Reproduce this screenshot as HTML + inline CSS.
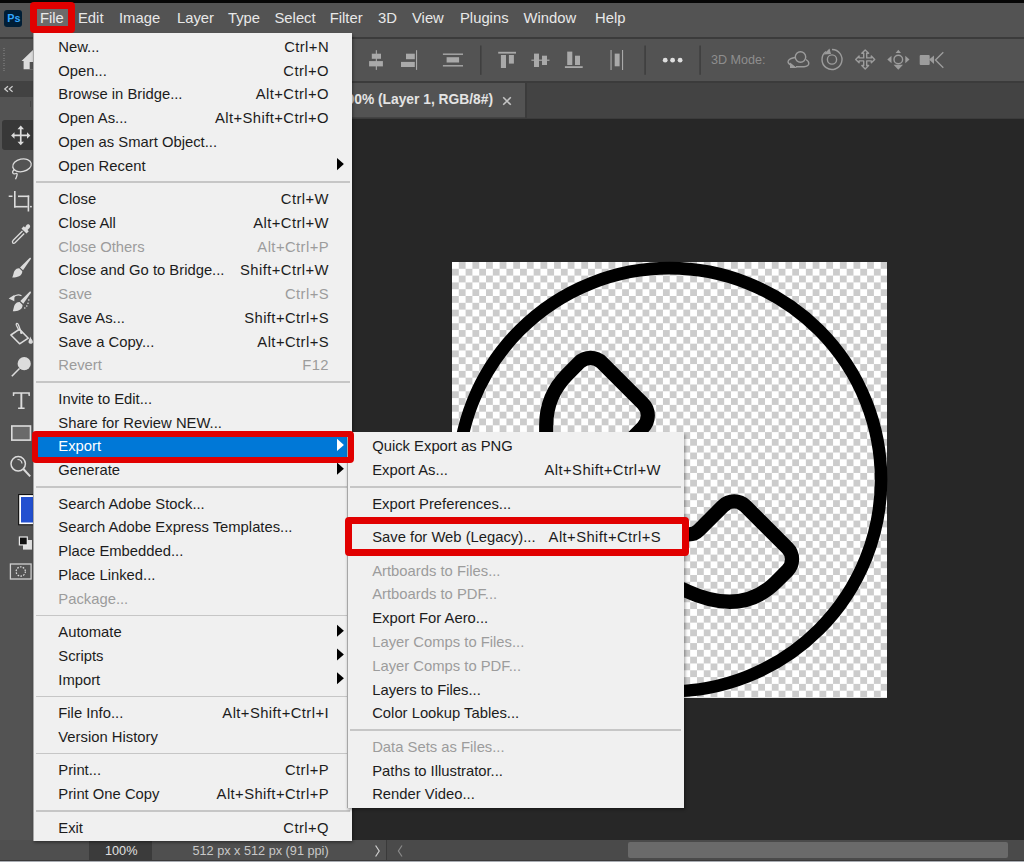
<!DOCTYPE html>
<html><head><meta charset="utf-8"><style>
html,body{margin:0;padding:0;width:1024px;height:862px;overflow:hidden;background:#272727;}
.t{position:absolute;font-family:"Liberation Sans", sans-serif;line-height:20px;white-space:nowrap;}
.r{position:absolute;}
svg{position:absolute;}
</style></head><body>

<div class="r" style="left:0px;top:0px;width:1024px;height:3px;background:#060606;"></div>
<div class="r" style="left:0px;top:3px;width:1024px;height:34px;background:#535353;"></div>
<div class="r" style="left:0px;top:37px;width:1024px;height:1.5px;background:#3b3b3b;"></div>
<div class="r" style="left:0px;top:38.5px;width:1024px;height:42.5px;background:#535353;"></div>
<div class="r" style="left:0px;top:80.7px;width:1024px;height:2px;background:#3b3b3b;"></div>
<div class="r" style="left:0px;top:82.7px;width:1024px;height:36.2px;background:#434343;"></div>
<div class="r" style="left:0px;top:82.7px;width:525.3px;height:34.8px;background:#535353;"></div>
<div class="r" style="left:525.3px;top:82.7px;width:1.6px;height:36px;background:#3b3b3b;"></div>
<div class="r" style="left:0px;top:117.5px;width:1024px;height:1.4px;background:#3b3b3b;"></div>
<div class="r" style="left:38px;top:118.9px;width:986px;height:721.1px;background:#272727;"></div>
<div class="r" style="left:0px;top:81px;width:38px;height:16px;background:#424242;"></div>
<div class="r" style="left:0px;top:97px;width:38px;height:765px;background:#535353;"></div>
<div class="r" style="left:30px;top:100.5px;width:1.2px;height:6px;background:#444444;"></div>
<div class="r" style="left:0px;top:840px;width:1024px;height:20px;background:#4f4f4f;"></div>
<div class="r" style="left:88.5px;top:840px;width:63.5px;height:20px;background:#3b3b3b;"></div>
<div class="r" style="left:386px;top:840px;width:638px;height:20px;background:#4a4a4a;"></div>
<div class="r" style="left:627.7px;top:842.3px;width:380px;height:15.6px;background:#6a6a6a;border-radius:2px;"></div>
<div class="r" style="left:0px;top:860px;width:1024px;height:1px;background:#3a3a3a;"></div>
<div class="r" style="left:0px;top:861px;width:1024px;height:1px;background:#a9adb3;"></div>
<div class="r" style="left:4px;top:9.8px;width:17.7px;height:17.2px;background:#001e36;border-radius:3px;"></div>
<div class="t" style="left:7.20px;top:8.16px;font-size:10.8px;color:#31a8ff;font-weight:bold;">Ps</div>
<div class="r" style="left:36px;top:9px;width:32px;height:17px;background:#6b6b6b;"></div>
<div class="t" style="left:40.00px;top:8.17px;font-size:14.8px;color:#e8e8e8;font-weight:normal;">File</div>
<div class="t" style="left:78.00px;top:8.17px;font-size:14.8px;color:#e8e8e8;font-weight:normal;">Edit</div>
<div class="t" style="left:119.00px;top:8.17px;font-size:14.8px;color:#e8e8e8;font-weight:normal;">Image</div>
<div class="t" style="left:177.00px;top:8.17px;font-size:14.8px;color:#e8e8e8;font-weight:normal;">Layer</div>
<div class="t" style="left:228.00px;top:8.17px;font-size:14.8px;color:#e8e8e8;font-weight:normal;">Type</div>
<div class="t" style="left:274.50px;top:8.17px;font-size:14.8px;color:#e8e8e8;font-weight:normal;">Select</div>
<div class="t" style="left:329.75px;top:8.17px;font-size:14.8px;color:#e8e8e8;font-weight:normal;">Filter</div>
<div class="t" style="left:378.00px;top:8.17px;font-size:14.8px;color:#e8e8e8;font-weight:normal;">3D</div>
<div class="t" style="left:412.00px;top:8.17px;font-size:14.8px;color:#e8e8e8;font-weight:normal;">View</div>
<div class="t" style="left:460.00px;top:8.17px;font-size:14.8px;color:#e8e8e8;font-weight:normal;">Plugins</div>
<div class="t" style="left:523.50px;top:8.17px;font-size:14.8px;color:#e8e8e8;font-weight:normal;">Window</div>
<div class="t" style="left:595.00px;top:8.17px;font-size:14.8px;color:#e8e8e8;font-weight:normal;">Help</div>
<div class="r" style="left:30px;top:2.2px;width:45px;height:30.9px;box-sizing:border-box;border:7.1px solid #e10000;border-radius:4px;"></div>
<div class="r" style="left:3px;top:47.5px;width:2px;height:1.2px;background:#6e6e6e;"></div>
<div class="r" style="left:3px;top:50.0px;width:2px;height:1.2px;background:#6e6e6e;"></div>
<div class="r" style="left:3px;top:52.5px;width:2px;height:1.2px;background:#6e6e6e;"></div>
<div class="r" style="left:3px;top:55.0px;width:2px;height:1.2px;background:#6e6e6e;"></div>
<div class="r" style="left:3px;top:57.5px;width:2px;height:1.2px;background:#6e6e6e;"></div>
<div class="r" style="left:3px;top:60.0px;width:2px;height:1.2px;background:#6e6e6e;"></div>
<div class="r" style="left:3px;top:62.5px;width:2px;height:1.2px;background:#6e6e6e;"></div>
<div class="r" style="left:3px;top:65.0px;width:2px;height:1.2px;background:#6e6e6e;"></div>
<div class="r" style="left:3px;top:67.5px;width:2px;height:1.2px;background:#6e6e6e;"></div>
<div class="r" style="left:3px;top:70.0px;width:2px;height:1.2px;background:#6e6e6e;"></div>
<svg style="left:0;top:0" width="1024" height="120"><g fill="#dcdcdc"><path d="M21.5 60.9 L34 49 L46 60.9 L43 60.9 L43 69.2 L23.6 69.2 L23.6 60.9 Z"/></g><rect x="29.7" y="62" width="8" height="7.2" fill="#535353"/></svg>
<svg style="left:0;top:0" width="1024" height="82"><g fill="#a9a9a9"><rect x="375.80" y="50.20" width="1.10" height="19.70" fill="#a9a9a9"/><rect x="371.80" y="53.70" width="9.20" height="5.10" fill="#a9a9a9"/><rect x="369.10" y="61.10" width="13.80" height="5.30" fill="#a9a9a9"/><rect x="416.00" y="50.20" width="1.10" height="19.70" fill="#a9a9a9"/><rect x="406.00" y="53.70" width="8.80" height="5.50" fill="#a9a9a9"/><rect x="401.00" y="61.90" width="13.80" height="5.10" fill="#a9a9a9"/><rect x="442.90" y="53.50" width="20.10" height="1.40" fill="#a9a9a9"/><rect x="446.60" y="57.20" width="12.50" height="5.30" fill="#a9a9a9"/><rect x="442.90" y="65.10" width="20.10" height="1.40" fill="#a9a9a9"/><rect x="480.00" y="45.50" width="1.60" height="29.30" fill="#3f3f3f"/><rect x="498.20" y="51.80" width="17.80" height="1.80" fill="#a9a9a9"/><rect x="500.90" y="55.00" width="5.10" height="13.00" fill="#a9a9a9"/><rect x="508.90" y="55.00" width="5.00" height="8.60" fill="#a9a9a9"/><rect x="531.40" y="59.60" width="18.10" height="1.20" fill="#a9a9a9"/><rect x="534.00" y="53.60" width="5.00" height="13.40" fill="#a9a9a9"/><rect x="542.00" y="55.70" width="5.00" height="9.30" fill="#a9a9a9"/><rect x="567.20" y="51.60" width="5.10" height="13.40" fill="#a9a9a9"/><rect x="575.00" y="55.70" width="5.00" height="9.30" fill="#a9a9a9"/><rect x="564.90" y="66.20" width="17.80" height="1.80" fill="#a9a9a9"/><rect x="610.50" y="50.00" width="1.10" height="20.00" fill="#a9a9a9"/><rect x="622.00" y="50.00" width="1.10" height="20.00" fill="#a9a9a9"/><rect x="614.70" y="53.60" width="4.90" height="12.70" fill="#a9a9a9"/><rect x="644.30" y="45.50" width="1.60" height="29.30" fill="#3f3f3f"/><rect x="699.30" y="45.50" width="1.60" height="29.30" fill="#3f3f3f"/></g><circle cx="665.2" cy="60.2" r="2.4" fill="#dedede"/><circle cx="672.6" cy="60.2" r="2.4" fill="#dedede"/><circle cx="680.1" cy="60.2" r="2.4" fill="#dedede"/><circle cx="800.5" cy="57" r="5.2" fill="none" stroke="#9c9c9c" stroke-width="1.4"/><path d="M795.3 57.5 C 788 58.5 786 62 790.5 65 M 796 66.8 L 804 66.8 C 810 66 810 62 806 59.5" fill="none" stroke="#9c9c9c" stroke-width="1.4"/><path d="M790 62.5 L797 68 L790 68 Z" fill="#9c9c9c"/><circle cx="832" cy="59.5" r="4.6" fill="none" stroke="#9c9c9c" stroke-width="1.4"/><path d="M826 51.5 A 10 10 0 1 0 832 49.5" fill="none" stroke="#9c9c9c" stroke-width="1.4"/><path d="M823.5 54.5 L829.5 48.5 L831 54 Z" fill="#9c9c9c"/><path d="M865.2 49.9 L868.6 53.3 L866.7 53.3 L866.7 57.9 L871.3 57.9 L871.3 56 L874.7 59.4 L871.3 62.8 L871.3 60.9 L866.7 60.9 L866.7 65.5 L868.6 65.5 L865.2 68.9 L861.8 65.5 L863.7 65.5 L863.7 60.9 L859.1 60.9 L859.1 62.8 L855.7 59.4 L859.1 56 L859.1 57.9 L863.7 57.9 L863.7 53.3 L861.8 53.3 Z" fill="none" stroke="#9c9c9c" stroke-width="1.4" stroke-linejoin="round"/><circle cx="898.3" cy="59.5" r="4.3" fill="none" stroke="#9c9c9c" stroke-width="1.4"/><path d="M898.3 49.7 L901 53 L895.6 53 Z M887.3 59.5 L891.5 55.8 L891.5 63.2 Z M909.5 59.5 L905.3 55.8 L905.3 63.2 Z M898.3 69.8 L903 64.8 L893.6 64.8 Z" fill="#9c9c9c"/><rect x="919.7" y="55" width="10" height="10" rx="1" fill="#9c9c9c"/><path d="M929 59.5 L934 55.5 L934 64 Z" fill="#9c9c9c"/><path d="M943.3 52.3 L935.5 60 L943.3 67.8" fill="none" stroke="#9c9c9c" stroke-width="1.4"/></svg>
<div class="t" style="left:711.00px;top:49.73px;font-size:12.6px;color:#8e8e8e;font-weight:normal;">3D Mode:</div>
<div class="t" style="right:531.00px;top:90.02px;font-size:13.8px;color:#e4e4e4;font-weight:bold;">Untitled-1 @ 100% (Layer 1, RGB/8#)</div>
<svg style="left:0;top:0" width="1024" height="120"><path d="M503.2 97.3 L510.8 104.8 M510.8 97.3 L503.2 104.8" stroke="#c4c4c4" stroke-width="1.6"/></svg>
<svg style="left:0;top:0" width="40" height="100"><path d="M8 86.2 L4.7 89 L8 91.8 M12.6 86.2 L9.3 89 L12.6 91.8" fill="none" stroke="#d0d0d0" stroke-width="1.2"/></svg>
<div class="r" style="left:451.6px;top:261.9px;width:435.75px;height:435.75px;background:conic-gradient(#cccccc 0 25%,#ffffff 0 50%,#cccccc 0 75%,#ffffff 0) 0 0/13.6172px 13.6172px;"></div>
<svg style="left:0;top:0" width="1024" height="862"><g fill="none" stroke="#000" stroke-width="14.2" stroke-linecap="butt" stroke-linejoin="round"><circle cx="669.48" cy="479.77" r="211.6" stroke-width="12.6"/><path d="M546.2 520 L546.2 425.3 A72 72 0 0 1 567.3 374.4 L579.19 362.51 A16 16 0 0 1 601.81 362.51 L642.83 403.58 A17 17 0 0 1 642.83 427.62 L590 480.45"/><path d="M640 572.7 L684 589.9 C691.45 592.81 738.52 619.48 776 582 L787.39 570.61 A16 16 0 0 0 787.39 547.99 L745.51 506.11 A16 16 0 0 0 722.89 506.11 L698.8 530.2 A14 14 0 0 1 688.9 534.3 L640 534.3"/></g></svg>
<div class="r" style="left:2px;top:119.8px;width:40px;height:30.2px;background:#383838;border-radius:3px;"></div>
<svg style="left:0;top:0" width="40" height="600"><g fill="#dcdcdc" stroke="none"><path d="M20.75 125.6 L24 129.2 L21.6 129.2 L21.6 134.6 L27 134.6 L27 132.2 L30.4 135.45 L27 138.7 L27 136.3 L21.6 136.3 L21.6 141.7 L24 141.7 L20.75 145.3 L17.5 141.7 L19.9 141.7 L19.9 136.3 L14.5 136.3 L14.5 138.7 L11.1 135.45 L14.5 132.2 L14.5 134.6 L19.9 134.6 L19.9 129.2 L17.5 129.2 Z"/></g><g fill="none" stroke="#dcdcdc" stroke-width="1.3"><ellipse cx="22" cy="165.3" rx="9.4" ry="6.3" transform="rotate(-12 22 165.3)"/><path d="M14.5 169.5 C 11 172 13 175 16 173.5 C 18 172.5 17 176 15.5 179.3"/></g><g fill="#dcdcdc"><rect x="14" y="191" width="1.6" height="16.5"/><rect x="8.7" y="195.5" width="3.8" height="1.5"/><rect x="14" y="205.9" width="13.7" height="1.6"/><rect x="18" y="195.5" width="11.2" height="1.6"/><rect x="27.6" y="195.5" width="1.6" height="16"/><rect x="30" y="205.9" width="1.9" height="1.5"/><path d="M26.5 225 C 28.5 223 31.5 226 29.5 228 L27.5 230 L28.8 231.3 L26.5 233.6 L25.2 232.3 L24 231.1 L22.8 229.9 L21.5 228.6 L23.8 226.3 L25.1 227.6 Z"/></g><g fill="none" stroke="#dcdcdc" stroke-width="1.3"><path d="M22.5 231 L13.2 240.3 C 11.5 242 13 244.5 15 242.7 L24.2 233.5"/></g><g fill="#dcdcdc"><path d="M29.6 257.9 C 30.6 257.3 31.3 258.2 30.8 259.1 L23 270.2 L20 267.4 Z"/><path d="M19.3 268.3 C 15.5 268 14 271.5 13.5 273.8 C 13 276 12.2 277.5 12.2 277.5 C 16.5 277.6 22.3 276.5 22.3 271.3 Z"/><path d="M29.6 291.8 C 30.6 291.2 31.3 292.1 30.8 293 L23.3 303.8 L20.3 301 Z"/><path d="M19.6 302 C 15.8 301.7 14.3 305.2 13.8 307.5 C 13.3 309.7 12.8 311.3 12.8 311.3 C 16.8 311.4 22.6 310.3 22.6 305 Z"/><path d="M8.7 298.5 L14.5 294.7 L14.3 301.2 Z"/></g><g fill="none" stroke="#dcdcdc" stroke-width="1.2"><path d="M13 297.5 C 15.5 295 19 294.5 21.5 295.8"/></g><g fill="#dcdcdc"><circle cx="28.8" cy="300" r="0.8"/><circle cx="28" cy="303.2" r="0.8"/><circle cx="26.8" cy="306" r="0.8"/><circle cx="24.8" cy="308" r="0.8"/></g><g fill="none" stroke="#dcdcdc" stroke-width="1.3"><path d="M19.5 329.2 L28.3 338.2 L19.6 343.8 L10.9 335 Z" stroke-linejoin="round" stroke-width="1.6"/><path d="M19.3 331 L16.5 325.5 C 15.5 323 17.5 322.5 18.5 325 L21.3 332.5"/></g><g fill="#dcdcdc"><circle cx="21.4" cy="332.8" r="1.3"/><path d="M30.2 336.5 C 31 339 33 340 33 342 C 33 344.4 28.5 344.4 28.5 342 C 28.5 340 29.8 339 30.2 336.5 Z"/><circle cx="24.2" cy="363.7" r="6.6"/></g><g fill="none" stroke="#dcdcdc" stroke-width="1.6"><path d="M19.5 368.5 L11.8 376.2"/></g><g fill="#dcdcdc"><path d="M12.8 392.2 L29.9 392.2 L29.9 396 L28.6 396 L28.2 393.8 L22.3 393.8 L22.3 407.5 L24.6 407.5 L24.6 409 L18.1 409 L18.1 407.5 L20.4 407.5 L20.4 393.8 L14.5 393.8 L14.1 396 L12.8 396 Z"/><rect x="11.8" y="426" width="18.7" height="14.1" fill="#6a6a6a" stroke="#dcdcdc" stroke-width="1.6"/></g><g fill="none" stroke="#dcdcdc" stroke-width="1.5"><circle cx="18.2" cy="463.8" r="7.2"/><path d="M23.4 469 L30.2 476.4" stroke-width="2"/><path d="M17.5 459.5 A 4.5 4.5 0 0 1 22 463.5" stroke-width="1.2"/></g><rect x="18.1" y="494" width="20" height="31.3" fill="#111"/><rect x="19.2" y="495.1" width="20" height="29.1" fill="#fff"/><rect x="21" y="497" width="20" height="25.5" fill="#2350d0"/><rect x="23" y="540" width="9" height="9.6" fill="#e0e0e0"/><rect x="18.8" y="536.4" width="9.1" height="9.1" fill="#e8e8e8"/><rect x="20" y="537.6" width="6.7" height="6.7" fill="#111"/><rect x="10.4" y="564" width="20.7" height="15" fill="none" stroke="#cfcfcf" stroke-width="1.3"/><circle cx="20.75" cy="571.5" r="4.6" fill="none" stroke="#dcdcdc" stroke-width="1.2" stroke-dasharray="1.6 1.3"/></svg>
<div class="t" style="left:105.00px;top:840.70px;font-size:12.7px;color:#e0e0e0;font-weight:normal;">100%</div>
<div class="t" style="left:192.50px;top:840.70px;font-size:12.7px;color:#c8c8c8;font-weight:normal;">512 px x 512 px (91 ppi)</div>
<svg style="left:0;top:0" width="1024" height="862"><path d="M375.6 845.5 L379.2 851 L375.6 856.5" fill="none" stroke="#cfcfcf" stroke-width="1.2"/><path d="M402 845.5 L398.4 851 L402 856.5" fill="none" stroke="#8a8a8a" stroke-width="1.2"/></svg>
<div class="r" style="left:385.8px;top:840px;width:1px;height:20px;background:#3a3a3a;"></div>
<div class="r" style="left:33px;top:32.5px;width:319px;height:808.0px;background:#f0f0f0;box-shadow:1px 1.5px 3px rgba(0,0,0,0.4);border-left:1px solid #a6a6a6;box-sizing:border-box;"></div>
<div class="t" style="left:58.30px;top:36.77px;font-size:14.8px;color:#1c1c1c;font-weight:normal;">New...</div>
<div class="t" style="right:695.00px;top:36.77px;font-size:14.8px;color:#1c1c1c;font-weight:normal;letter-spacing:0.42px;">Ctrl+N</div>
<div class="t" style="left:58.30px;top:60.53px;font-size:14.8px;color:#1c1c1c;font-weight:normal;">Open...</div>
<div class="t" style="right:695.00px;top:60.53px;font-size:14.8px;color:#1c1c1c;font-weight:normal;letter-spacing:0.42px;">Ctrl+O</div>
<div class="t" style="left:58.30px;top:84.29px;font-size:14.8px;color:#1c1c1c;font-weight:normal;">Browse in Bridge...</div>
<div class="t" style="right:695.00px;top:84.29px;font-size:14.8px;color:#1c1c1c;font-weight:normal;letter-spacing:0.42px;">Alt+Ctrl+O</div>
<div class="t" style="left:58.30px;top:108.05px;font-size:14.8px;color:#1c1c1c;font-weight:normal;">Open As...</div>
<div class="t" style="right:695.00px;top:108.05px;font-size:14.8px;color:#1c1c1c;font-weight:normal;letter-spacing:0.42px;">Alt+Shift+Ctrl+O</div>
<div class="t" style="left:58.30px;top:131.81px;font-size:14.8px;color:#1c1c1c;font-weight:normal;">Open as Smart Object...</div>
<div class="t" style="left:58.30px;top:155.57px;font-size:14.8px;color:#1c1c1c;font-weight:normal;">Open Recent</div>
<svg style="left:0;top:0" width="1024" height="862"><path d="M337 158.00 L343.9 164.10 L337 170.20 Z" fill="#000000"/></svg>
<div class="r" style="left:35.8px;top:181.4px;width:314.2px;height:1.5px;background:#c6c6c6;"></div>
<div class="t" style="left:58.30px;top:189.07px;font-size:14.8px;color:#1c1c1c;font-weight:normal;">Close</div>
<div class="t" style="right:695.00px;top:189.07px;font-size:14.8px;color:#1c1c1c;font-weight:normal;letter-spacing:0.42px;">Ctrl+W</div>
<div class="t" style="left:58.30px;top:212.83px;font-size:14.8px;color:#1c1c1c;font-weight:normal;">Close All</div>
<div class="t" style="right:695.00px;top:212.83px;font-size:14.8px;color:#1c1c1c;font-weight:normal;letter-spacing:0.42px;">Alt+Ctrl+W</div>
<div class="t" style="left:58.30px;top:236.59px;font-size:14.8px;color:#9c9c9c;font-weight:normal;">Close Others</div>
<div class="t" style="right:695.00px;top:236.59px;font-size:14.8px;color:#9c9c9c;font-weight:normal;letter-spacing:0.42px;">Alt+Ctrl+P</div>
<div class="t" style="left:58.30px;top:260.35px;font-size:14.8px;color:#1c1c1c;font-weight:normal;">Close and Go to Bridge...</div>
<div class="t" style="right:695.00px;top:260.35px;font-size:14.8px;color:#1c1c1c;font-weight:normal;letter-spacing:0.42px;">Shift+Ctrl+W</div>
<div class="t" style="left:58.30px;top:284.11px;font-size:14.8px;color:#9c9c9c;font-weight:normal;">Save</div>
<div class="t" style="right:695.00px;top:284.11px;font-size:14.8px;color:#9c9c9c;font-weight:normal;letter-spacing:0.42px;">Ctrl+S</div>
<div class="t" style="left:58.30px;top:307.87px;font-size:14.8px;color:#1c1c1c;font-weight:normal;">Save As...</div>
<div class="t" style="right:695.00px;top:307.87px;font-size:14.8px;color:#1c1c1c;font-weight:normal;letter-spacing:0.42px;">Shift+Ctrl+S</div>
<div class="t" style="left:58.30px;top:331.63px;font-size:14.8px;color:#1c1c1c;font-weight:normal;">Save a Copy...</div>
<div class="t" style="right:695.00px;top:331.63px;font-size:14.8px;color:#1c1c1c;font-weight:normal;letter-spacing:0.42px;">Alt+Ctrl+S</div>
<div class="t" style="left:58.30px;top:355.39px;font-size:14.8px;color:#9c9c9c;font-weight:normal;">Revert</div>
<div class="t" style="right:695.00px;top:355.39px;font-size:14.8px;color:#9c9c9c;font-weight:normal;letter-spacing:0.42px;">F12</div>
<div class="r" style="left:35.8px;top:381.22px;width:314.2px;height:1.5px;background:#c6c6c6;"></div>
<div class="t" style="left:58.30px;top:388.89px;font-size:14.8px;color:#1c1c1c;font-weight:normal;">Invite to Edit...</div>
<div class="t" style="left:58.30px;top:412.65px;font-size:14.8px;color:#1c1c1c;font-weight:normal;">Share for Review NEW...</div>
<div class="r" style="left:33.8px;top:434.36px;width:318.2px;height:23.76px;background:#0078d7;"></div>
<div class="t" style="left:58.30px;top:436.41px;font-size:14.8px;color:#ffffff;font-weight:normal;">Export</div>
<svg style="left:0;top:0" width="1024" height="862"><path d="M337 438.84 L343.9 444.94 L337 451.04 Z" fill="#ffffff"/></svg>
<div class="t" style="left:58.30px;top:460.17px;font-size:14.8px;color:#1c1c1c;font-weight:normal;">Generate</div>
<svg style="left:0;top:0" width="1024" height="862"><path d="M337 462.60 L343.9 468.70 L337 474.80 Z" fill="#000000"/></svg>
<div class="r" style="left:35.8px;top:486.0px;width:314.2px;height:1.5px;background:#c6c6c6;"></div>
<div class="t" style="left:58.30px;top:493.67px;font-size:14.8px;color:#1c1c1c;font-weight:normal;">Search Adobe Stock...</div>
<div class="t" style="left:58.30px;top:517.43px;font-size:14.8px;color:#1c1c1c;font-weight:normal;">Search Adobe Express Templates...</div>
<div class="t" style="left:58.30px;top:541.19px;font-size:14.8px;color:#1c1c1c;font-weight:normal;">Place Embedded...</div>
<div class="t" style="left:58.30px;top:564.95px;font-size:14.8px;color:#1c1c1c;font-weight:normal;">Place Linked...</div>
<div class="t" style="left:58.30px;top:588.71px;font-size:14.8px;color:#9c9c9c;font-weight:normal;">Package...</div>
<div class="r" style="left:35.8px;top:614.54px;width:314.2px;height:1.5px;background:#c6c6c6;"></div>
<div class="t" style="left:58.30px;top:622.21px;font-size:14.8px;color:#1c1c1c;font-weight:normal;">Automate</div>
<svg style="left:0;top:0" width="1024" height="862"><path d="M337 624.64 L343.9 630.74 L337 636.84 Z" fill="#000000"/></svg>
<div class="t" style="left:58.30px;top:645.97px;font-size:14.8px;color:#1c1c1c;font-weight:normal;">Scripts</div>
<svg style="left:0;top:0" width="1024" height="862"><path d="M337 648.40 L343.9 654.50 L337 660.60 Z" fill="#000000"/></svg>
<div class="t" style="left:58.30px;top:669.73px;font-size:14.8px;color:#1c1c1c;font-weight:normal;">Import</div>
<svg style="left:0;top:0" width="1024" height="862"><path d="M337 672.16 L343.9 678.26 L337 684.36 Z" fill="#000000"/></svg>
<div class="r" style="left:35.8px;top:695.56px;width:314.2px;height:1.5px;background:#c6c6c6;"></div>
<div class="t" style="left:58.30px;top:703.23px;font-size:14.8px;color:#1c1c1c;font-weight:normal;">File Info...</div>
<div class="t" style="right:695.00px;top:703.23px;font-size:14.8px;color:#1c1c1c;font-weight:normal;letter-spacing:0.42px;">Alt+Shift+Ctrl+I</div>
<div class="t" style="left:58.30px;top:726.99px;font-size:14.8px;color:#1c1c1c;font-weight:normal;">Version History</div>
<div class="r" style="left:35.8px;top:752.82px;width:314.2px;height:1.5px;background:#c6c6c6;"></div>
<div class="t" style="left:58.30px;top:760.49px;font-size:14.8px;color:#1c1c1c;font-weight:normal;">Print...</div>
<div class="t" style="right:695.00px;top:760.49px;font-size:14.8px;color:#1c1c1c;font-weight:normal;letter-spacing:0.42px;">Ctrl+P</div>
<div class="t" style="left:58.30px;top:784.25px;font-size:14.8px;color:#1c1c1c;font-weight:normal;">Print One Copy</div>
<div class="t" style="right:695.00px;top:784.25px;font-size:14.8px;color:#1c1c1c;font-weight:normal;letter-spacing:0.42px;">Alt+Shift+Ctrl+P</div>
<div class="r" style="left:35.8px;top:810.08px;width:314.2px;height:1.5px;background:#c6c6c6;"></div>
<div class="t" style="left:58.30px;top:817.75px;font-size:14.8px;color:#1c1c1c;font-weight:normal;">Exit</div>
<div class="t" style="right:695.00px;top:817.75px;font-size:14.8px;color:#1c1c1c;font-weight:normal;letter-spacing:0.42px;">Ctrl+Q</div>
<div class="r" style="left:347px;top:432.3px;width:336.79999999999995px;height:375.99999999999994px;background:#f0f0f0;box-shadow:1px 1.5px 3px rgba(0,0,0,0.4);border-left:1px solid #a6a6a6;box-sizing:border-box;"></div>
<div class="t" style="left:372.20px;top:436.47px;font-size:14.8px;color:#1c1c1c;font-weight:normal;">Quick Export as PNG</div>
<div class="t" style="left:372.20px;top:460.23px;font-size:14.8px;color:#1c1c1c;font-weight:normal;">Export As...</div>
<div class="t" style="right:363.00px;top:460.23px;font-size:14.8px;color:#1c1c1c;font-weight:normal;letter-spacing:0.42px;">Alt+Shift+Ctrl+W</div>
<div class="r" style="left:349.7px;top:486.06px;width:331.3px;height:1.5px;background:#c6c6c6;"></div>
<div class="t" style="left:372.20px;top:493.73px;font-size:14.8px;color:#1c1c1c;font-weight:normal;">Export Preferences...</div>
<div class="r" style="left:349.7px;top:519.56px;width:331.3px;height:1.5px;background:#c6c6c6;"></div>
<div class="t" style="left:372.20px;top:527.23px;font-size:14.8px;color:#1c1c1c;font-weight:normal;">Save for Web (Legacy)...</div>
<div class="t" style="right:363.00px;top:527.23px;font-size:14.8px;color:#1c1c1c;font-weight:normal;letter-spacing:0.42px;">Alt+Shift+Ctrl+S</div>
<div class="r" style="left:349.7px;top:553.06px;width:331.3px;height:1.5px;background:#c6c6c6;"></div>
<div class="t" style="left:372.20px;top:560.73px;font-size:14.8px;color:#9c9c9c;font-weight:normal;">Artboards to Files...</div>
<div class="t" style="left:372.20px;top:584.49px;font-size:14.8px;color:#9c9c9c;font-weight:normal;">Artboards to PDF...</div>
<div class="t" style="left:372.20px;top:608.25px;font-size:14.8px;color:#1c1c1c;font-weight:normal;">Export For Aero...</div>
<div class="t" style="left:372.20px;top:632.01px;font-size:14.8px;color:#9c9c9c;font-weight:normal;">Layer Comps to Files...</div>
<div class="t" style="left:372.20px;top:655.77px;font-size:14.8px;color:#9c9c9c;font-weight:normal;">Layer Comps to PDF...</div>
<div class="t" style="left:372.20px;top:679.53px;font-size:14.8px;color:#1c1c1c;font-weight:normal;">Layers to Files...</div>
<div class="t" style="left:372.20px;top:703.29px;font-size:14.8px;color:#1c1c1c;font-weight:normal;">Color Lookup Tables...</div>
<div class="r" style="left:349.7px;top:729.12px;width:331.3px;height:1.5px;background:#c6c6c6;"></div>
<div class="t" style="left:372.20px;top:736.79px;font-size:14.8px;color:#9c9c9c;font-weight:normal;">Data Sets as Files...</div>
<div class="t" style="left:372.20px;top:760.55px;font-size:14.8px;color:#1c1c1c;font-weight:normal;">Paths to Illustrator...</div>
<div class="t" style="left:372.20px;top:784.31px;font-size:14.8px;color:#1c1c1c;font-weight:normal;">Render Video...</div>
<div class="r" style="left:345.4px;top:517.3px;width:343.5px;height:39.1px;box-sizing:border-box;border:7px solid #e10000;border-radius:4px;"></div>
<div class="r" style="left:32.4px;top:430.6px;width:322px;height:32.2px;box-sizing:border-box;border:6.8px solid #e10000;border-radius:4px;"></div>
</body></html>
